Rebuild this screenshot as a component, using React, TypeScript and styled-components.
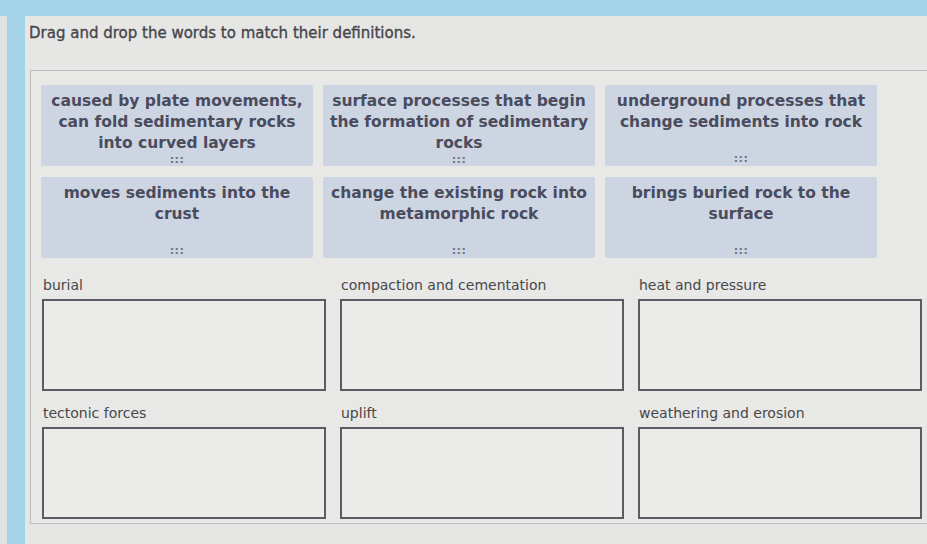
import styled, { createGlobalStyle } from 'styled-components';

const GlobalStyle = createGlobalStyle`
	html, body {
		margin: 0;
		padding: 0;
		background: #e4e4e2;
	}
	body {
		font-family: "DejaVu Sans", Verdana, sans-serif;
	}
`;

const definitions = [
	'caused by plate movements, can fold sedimentary rocks into curved layers',
	'surface processes that begin the formation of sedimentary rocks',
	'underground processes that change sediments into rock',
	'moves sediments into the crust',
	'change the existing rock into metamorphic rock',
	'brings buried rock to the surface',
];

const terms = [
	'burial',
	'compaction and cementation',
	'heat and pressure',
	'tectonic forces',
	'uplift',
	'weathering and erosion',
];

const Frame = styled.div`
	display: flex;
	flex-direction: column;
	width: 100%;
	height: 544px;
	overflow: hidden;
`;

const TopBar = styled.div`
	height: 16px;
	flex: none;
	background: #a3d3e6;
`;

const Body = styled.div`
	display: flex;
	flex: 1;
`;

const SideStrip = styled.div`
	width: 18px;
	flex: none;
	background: #a3d3e6;
	border-left: 7px solid #dfe3e3;
`;

const Main = styled.main`
	flex: 1;
	padding: 8px 0 0 4px;
	background: #e6e6e4;
`;

const Title = styled.h1`
	margin: 0;
	font-size: 15px;
	font-weight: normal;
	line-height: 18px;
	color: #46464c;
	-webkit-text-stroke: 0.35px #46464c;
`;

const Panel = styled.section`
	margin: 28px 0 0 1px;
	padding: 14px 0 4px 10px;
	border: 1px solid #bdbdbd;
	border-right: none;
	background: #e8e8e6;
`;

const CardGrid = styled.div`
	display: grid;
	grid-template-columns: repeat(3, 272px);
	grid-auto-rows: 81px;
	column-gap: 10px;
	row-gap: 11px;
`;

const Card = styled.div`
	display: flex;
	flex-direction: column;
	align-items: center;
	padding: 6px 6px 1px;
	background: #cdd5e2;
	border-radius: 2px;
	text-align: center;
`;

const CardText = styled.div`
	font-size: 15.5px;
	font-weight: bold;
	line-height: 21px;
	color: #4a4c5e;
`;

const Grip = styled.div`
	margin-top: auto;
	font-size: 11px;
	font-weight: bold;
	line-height: 12px;
	letter-spacing: 0.5px;
	color: #6f7485;
`;

const DropGrid = styled.div`
	display: grid;
	grid-template-columns: repeat(3, 284px);
	column-gap: 14px;
	row-gap: 13px;
	margin: 18px 0 0 1px;
`;

const DropSlot = styled.div`
	display: flex;
	flex-direction: column;
	gap: 5px;
`;

const Term = styled.div`
	font-size: 14px;
	line-height: 18px;
	color: #47474a;
	padding-left: 1px;
`;

const DropBox = styled.div`
	height: 88px;
	border: 2px solid #5a5c63;
	background: #ebebea;
`;

export default function App() {
	return (
		<>
			<GlobalStyle />
			<Frame>
				<TopBar />
				<Body>
					<SideStrip />
					<Main>
						<Title>Drag and drop the words to match their definitions.</Title>
						<Panel>
							<CardGrid>
								{definitions.map((text) => (
									<Card key={text}>
										<CardText>{text}</CardText>
										<Grip>:::</Grip>
									</Card>
								))}
							</CardGrid>
							<DropGrid>
								{terms.map((term) => (
									<DropSlot key={term}>
										<Term>{term}</Term>
										<DropBox />
									</DropSlot>
								))}
							</DropGrid>
						</Panel>
					</Main>
				</Body>
			</Frame>
		</>
	);
}
